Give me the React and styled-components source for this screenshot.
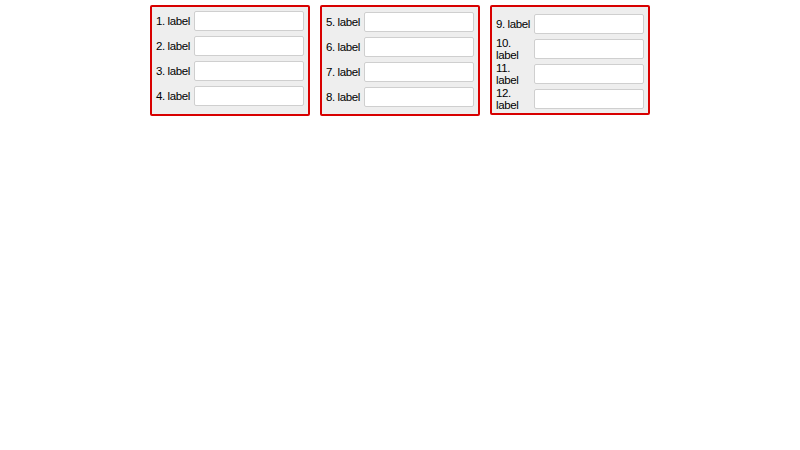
import React from "react";
import styled, { createGlobalStyle } from "styled-components";

const Global = createGlobalStyle`
  html, body { margin: 0; padding: 0; background: #ffffff; }
  body { font-family: "Liberation Sans", Arial, sans-serif; color: #000; }
`;

const Page = styled.div`
  display: flex;
  justify-content: center;
  align-items: flex-start;
  gap: 10px;
  padding-top: 5px;
`;

const Box = styled.div`
  box-sizing: border-box;
  width: 160px;
  border: 2px solid #d80000;
  border-radius: 2px;
  background: #eeeeee;
  padding: ${(p) => p.$pad};
  display: flex;
  flex-direction: column;
  gap: 5px;
`;

const Row = styled.div`
  display: flex;
  align-items: center;
  height: 20px;
`;

const Label = styled.label`
  width: 38px;
  flex: none;
  font-size: 11.5px;
  letter-spacing: -0.4px;
  line-height: 12px;
`;

const Field = styled.input`
  box-sizing: border-box;
  width: 110px;
  height: 20px;
  margin: 0;
  padding: 0 4px;
  border: 1px solid #cfcfcf;
  border-radius: 2px;
  background: #ffffff;
  font-family: inherit;
  font-size: 11px;
  outline: none;
`;

const groups = [
  { pad: "4px 4px 8px", items: [1, 2, 3, 4] },
  { pad: "5px 4px 7px", items: [5, 6, 7, 8] },
  { pad: "7px 4px 4px", items: [9, 10, 11, 12] },
];

export default function App() {
  return (
    <>
      <Global />
      <Page>
        {groups.map((g, i) => (
          <Box key={i} $pad={g.pad}>
            {g.items.map((n) => (
              <Row key={n}>
                <Label>{n}. label</Label>
                <Field type="text" />
              </Row>
            ))}
          </Box>
        ))}
      </Page>
    </>
  );
}
